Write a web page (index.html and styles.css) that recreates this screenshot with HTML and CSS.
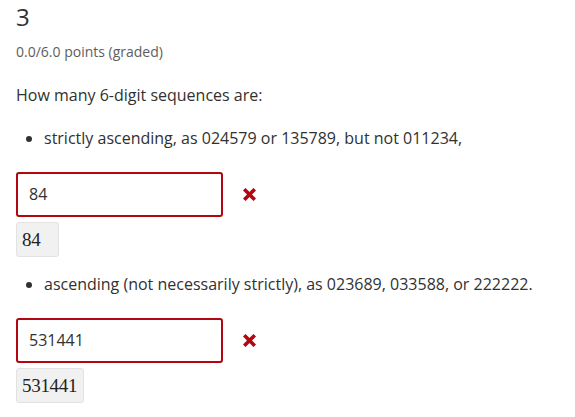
FILE: index.html
```html
<!DOCTYPE html>
<html>
<head>
<meta charset="utf-8">
<link rel="stylesheet" href="styles.css">
</head>
<body>
<div class="problem">
  <h3 class="title">3</h3>
  <div class="points">0.0/6.0 points (graded)</div>
  <p class="question">How many 6-digit sequences are:</p>
  <ul class="items first"><li>strictly ascending, as 024579 or 135789, but not 011234,</li></ul>
  <div class="answer-row">
    <div class="input incorrect">84</div>
    <svg class="mark" viewBox="0 0 13 13" width="13" height="13"><path d="M2.5 2.5 L10.5 10.5 M10.5 2.5 L2.5 10.5" stroke="#b20610" stroke-width="3.6" stroke-linecap="square" fill="none"/></svg>
  </div>
  <div class="preview">84</div>
  <ul class="items"><li>ascending (not necessarily strictly), as 023689, 033588, or 222222.</li></ul>
  <div class="answer-row">
    <div class="input incorrect">531441</div>
    <svg class="mark" viewBox="0 0 13 13" width="13" height="13"><path d="M2.5 2.5 L10.5 10.5 M10.5 2.5 L2.5 10.5" stroke="#b20610" stroke-width="3.6" stroke-linecap="square" fill="none"/></svg>
  </div>
  <div class="preview">531441</div>
</div>
</body>
</html>
```
FILE: styles.css
```css
html, body {
  margin: 0;
  padding: 0;
  background: #fff;
}
body {
  font-family: "Open Sans", "Liberation Sans", sans-serif;
  color: #313131;
}
.problem {
  padding: 0 16px;
}
.title {
  margin: 0;
  padding-top: 1px;
  font-size: 24px;
  font-weight: 400;
  line-height: 32px;
  color: #313131;
}
.points {
  margin-top: 9px;
  font-size: 14px;
  line-height: 20px;
  color: #5e5e5e;
}
.question {
  margin: 21px 0 0;
  font-size: 16px;
  line-height: 24px;
}
.items {
  margin: 15px 0 0;
  padding-left: 28px;
  font-size: 16px;
  line-height: 24px;
}
.items.first {
  margin-top: 19px;
}
.answer-row {
  margin-top: 22px;
  display: flex;
  align-items: center;
  gap: 20px;
}
.input {
  box-sizing: border-box;
  width: 207px;
  height: 45px;
  border: 2px solid #b20610;
  border-radius: 3px;
  padding: 0 11px;
  font-size: 16px;
  line-height: 41px;
  color: #313131;
}
.mark {
  display: block;
}
.preview {
  display: inline-block;
  margin-top: 5px;
  box-sizing: border-box;
  min-width: 43px;
  height: 35px;
  padding: 0 6px 0 5px;
  background: #f1f1f1;
  border: 1px solid #e2e2e2;
  border-radius: 3px;
  font-family: "Liberation Serif", "DejaVu Serif", serif;
  font-size: 19px;
  letter-spacing: -0.3px;
  line-height: 33px;
  color: #222;
}
```
